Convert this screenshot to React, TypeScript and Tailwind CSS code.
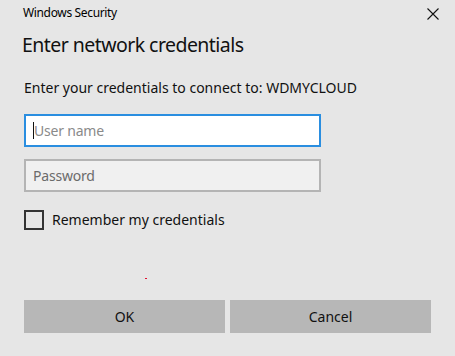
import React from "react";

export default function App() {
  return (
    <div
      className="relative w-[455px] h-[356px] bg-[#e6e6e6] flex flex-col text-[#000]"
      style={{ fontFamily: '"Noto Sans", "Open Sans", sans-serif' }}
    >
      <div className="flex items-start justify-between pl-[23px] pr-[15px] pt-[5px] h-[26px]">
        <span className="text-[12px] leading-[16px] tracking-[-0.35px] text-[#000]">Windows Security</span>
        <svg width="14" height="14" viewBox="0 0 14 14" className="mt-[2px]">
          <path d="M1.5 1.5 L12.5 12.5 M12.5 1.5 L1.5 12.5" stroke="#111" strokeWidth="1.1" fill="none" />
        </svg>
      </div>
      <div className="pl-[22px] text-[19.5px] leading-[28px] tracking-[-0.55px] mt-[5px] text-[#111]">
        Enter network credentials
      </div>
      <div className="pl-[24px] text-[14px] leading-[18px] mt-[20px] text-[#111]">
        Enter your credentials to connect to: WDMYCLOUD
      </div>
      <div className="pl-[24px] mt-[17px] flex flex-col gap-[12px]">
        <div className="w-[297px] h-[33px] bg-white border-[2px] border-[#2a8ee0] flex items-center pl-[7px]">
          <span className="w-[1px] h-[17px] bg-[#111]"></span>
          <span className="text-[14px] text-[#8a8a8a] tracking-[-0.2px]">User name</span>
        </div>
        <div className="w-[297px] h-[33px] bg-[#f0f0f0] border-[2px] border-[#b4b4b4] flex items-center pl-[7px]">
          <span className="text-[14px] text-[#6b6b6b] tracking-[-0.2px]">Password</span>
        </div>
      </div>
      <div className="pl-[24px] mt-[17px] flex items-center gap-[8px]">
        <span className="w-[20px] h-[20px] border-[2px] border-[#333] block"></span>
        <span className="text-[14px] text-[#111]">Remember my credentials</span>
      </div>
      <div className="flex-1"></div>
      <div className="pl-[24px] pb-[23px] flex gap-[5px]">
        <button className="w-[201px] h-[33px] bg-[#b7b7b7] text-[14px] text-[#111]">OK</button>
        <button className="w-[201px] h-[33px] bg-[#b7b7b7] text-[14px] text-[#111]">Cancel</button>
      </div>
      <span className="absolute left-[145px] top-[278px] w-[2px] h-[1px] bg-[#e01030]"></span>
    </div>
  );
}
